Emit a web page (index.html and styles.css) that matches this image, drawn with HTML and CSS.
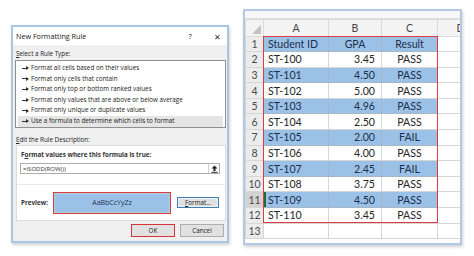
FILE: index.html
```html
<!DOCTYPE html>
<html>
<head>
<meta charset="utf-8">
<link rel="stylesheet" href="styles.css">
</head>
<body>
<div class="stage">
  <div class="dialog">
    <div class="titlebar">
      <span class="title">New Formatting Rule</span>
      <span class="help">?</span>
      <span class="close">✕</span>
    </div>
    <div class="dbody">
      <div class="label"><u>S</u>elect a Rule Type:</div>
      <ul class="rulelist">
        <li><span class="arrow"></span>Format all cells based on their values</li>
        <li><span class="arrow"></span>Format only cells that contain</li>
        <li><span class="arrow"></span>Format only top or bottom ranked values</li>
        <li><span class="arrow"></span>Format only values that are above or below average</li>
        <li><span class="arrow"></span>Format only unique or duplicate values</li>
        <li class="sel"><span class="arrow"></span>Use a formula to determine which cells to format</li>
      </ul>
      <div class="label label2"><u>E</u>dit the Rule Description:</div>
      <div class="panel">
        <div class="panel-top">
          <div class="bold">F<u>o</u>rmat values where this formula is true:</div>
          <div class="formula">
            <span class="ftext">=ISODD(ROW())</span>
            <span class="collapse">
              <svg width="9" height="8" viewBox="0 0 9 8"><path d="M4.5 0.5 L7.5 3.5 H5.5 V6 H3.5 V3.5 H1.5 Z" fill="#222"/><rect x="1.5" y="6.8" width="6" height="1" fill="#222"/></svg>
            </span>
          </div>
        </div>
        <div class="panel-bottom">
          <span class="bold plabel">Preview:</span>
          <div class="preview">AaBbCcYyZz</div>
          <div class="btn fmt"><u>F</u>ormat...</div>
        </div>
      </div>
      <div class="buttons">
        <div class="btn ok">OK</div>
        <div class="btn">Cancel</div>
      </div>
    </div>
  </div>

  <div class="sheet">
    <div class="sheet-inner">
      <div class="topstrip"></div>
      <table class="grid">
        <colgroup><col class="c0"><col class="ca"><col class="cb"><col class="cc"><col class="cd"></colgroup>
        <tr class="colhead"><th class="corner"><span class="tri"></span></th><th>A</th><th>B</th><th>C</th><th>D</th></tr>
        <tr class="blue"><th>1</th><td>Student ID</td><td class="ctr">GPA</td><td class="ctr">Result</td><td class="e"></td></tr>
        <tr><th>2</th><td>ST-100</td><td class="num">3.45</td><td class="ctr">PASS</td><td class="e"></td></tr>
        <tr class="blue"><th>3</th><td>ST-101</td><td class="num">4.50</td><td class="ctr">PASS</td><td class="e"></td></tr>
        <tr><th>4</th><td>ST-102</td><td class="num">5.00</td><td class="ctr">PASS</td><td class="e"></td></tr>
        <tr class="blue"><th>5</th><td>ST-103</td><td class="num">4.96</td><td class="ctr">PASS</td><td class="e"></td></tr>
        <tr><th>6</th><td>ST-104</td><td class="num">2.50</td><td class="ctr">PASS</td><td class="e"></td></tr>
        <tr class="blue"><th>7</th><td>ST-105</td><td class="num">2.00</td><td class="ctr">FAIL</td><td class="e"></td></tr>
        <tr><th>8</th><td>ST-106</td><td class="num">4.00</td><td class="ctr">PASS</td><td class="e"></td></tr>
        <tr class="blue"><th>9</th><td>ST-107</td><td class="num">2.45</td><td class="ctr">FAIL</td><td class="e"></td></tr>
        <tr><th>10</th><td>ST-108</td><td class="num">3.75</td><td class="ctr">PASS</td><td class="e"></td></tr>
        <tr class="blue"><th class="active">11</th><td class="act">ST-109</td><td class="num">4.50</td><td class="ctr">PASS</td><td class="e"></td></tr>
        <tr><th>12</th><td>ST-110</td><td class="num">3.45</td><td class="ctr">PASS</td><td class="e"></td></tr>
        <tr><th>13</th><td></td><td></td><td></td><td class="e"></td></tr>
      </table>
      <div class="highlight"></div>
    </div>
  </div>
</div>
</body>
</html>
```

FILE: styles.css
```css
* { box-sizing: border-box; }
html, body { margin: 0; padding: 0; background: #fff; }
body { width: 474px; height: 256px; overflow: hidden; }

.stage {
  display: flex;
  align-items: flex-start;
}

/* ---------- dialog ---------- */
.dialog {
  margin-left: 11px;
  margin-top: 25px;
  width: 218px;
  height: 218px;
  border: 2px solid #a9c5e4;
  box-shadow: 1px 2px 3px rgba(0,0,0,0.18);
  background: #f0f0f0;
  display: flex;
  flex-direction: column;
  font-family: "Open Sans", "Liberation Sans", sans-serif;
  color: #222;
}
.titlebar {
  height: 18px;
  background: #fff;
  display: flex;
  align-items: center;
  padding-left: 3px;
  font-size: 7.2px;
}
.title { flex: 1; }
.help { width: 10px; text-align: center; margin-right: 17px; font-size: 7.5px; }
.close { width: 10px; text-align: center; margin-right: 5px; font-size: 8px; color: #333; }

.dbody {
  flex: 1;
  display: flex;
  flex-direction: column;
  padding: 4px 1px 0 2px;
  font-size: 6.3px;
}
.label { height: 10px; line-height: 10px; padding-left: 1px; margin-bottom: 1px; }
.label2 { margin-top: 7px; margin-bottom: 0; }

.rulelist {
  list-style: none;
  margin: 0;
  padding: 2px 2px 1px 2px;
  background: #fff;
  border: 1px solid #8e8f8f;
  height: 68px;
}
.rulelist li {
  height: 10.6px;
  line-height: 10.6px;
  display: flex;
  align-items: center;
  padding-left: 4px;
}
.rulelist li.sel { background: #e5e5e5; }
.arrow {
  display: inline-block;
  position: relative;
  width: 6px;
  height: 1px;
  background: #333;
  margin-right: 3px;
}
.arrow::after {
  content: "";
  position: absolute;
  right: -1px;
  top: -1.5px;
  border-left: 3px solid #333;
  border-top: 2px solid transparent;
  border-bottom: 2px solid transparent;
}

.panel {
  margin-left: 1px;
  height: 76px;
  background: #fff;
  border: 1px solid #dcdcdc;
  display: flex;
  flex-direction: column;
}
.panel-top {
  height: 39px;
  padding: 4px 5px 0 3px;
  border-bottom: 1px solid #e8e8e8;
}
.bold { font-weight: 700; color: #333; }
.panel-top .bold { height: 10px; line-height: 10px; padding-left: 1px; }
.formula {
  margin-top: 3px;
  height: 11px;
  border: 1px solid #adadad;
  display: flex;
  align-items: center;
  justify-content: space-between;
  padding-left: 2px;
  font-size: 6px;
  color: #333;
}
.collapse {
  width: 11px;
  height: 9px;
  margin-right: 0;
  display: flex;
  align-items: center;
  justify-content: center;
  border-left: 1px solid #d0d0d0;
}
.panel-bottom {
  flex: 1;
  display: flex;
  align-items: center;
  padding: 0 6px 0 4px;
}
.plabel { width: 32px; }
.preview {
  width: 119px;
  height: 22px;
  background: #9bc2e6;
  border: 1px solid #d8403c;
  box-shadow: inset 0 0 0 1px #b7c9dd;
  display: flex;
  align-items: center;
  justify-content: center;
  color: #1e3556;
  font-size: 7px;
  margin-right: 6px;
}
.btn {
  width: 44px;
  height: 13px;
  background: #e1e1e1;
  border: 1px solid #adadad;
  display: flex;
  align-items: center;
  justify-content: center;
  font-size: 6.3px;
  color: #222;
}
.fmt {
  width: 42px;
  height: 11px;
  border: 1px solid #3c7fb1;
  box-shadow: inset 0 0 0 1px #e9f2fa;
}
.buttons {
  flex: 1;
  display: flex;
  justify-content: flex-end;
  align-items: flex-start;
  gap: 5px;
  padding-top: 3px;
  padding-right: 2px;
}
.ok { border: 1px solid #d6343a; }

/* ---------- sheet ---------- */
.sheet {
  margin-left: 14px;
  margin-top: 9px;
  width: 219px;
  height: 236px;
  border: 2px solid #b1c9e5;
  box-shadow: 1px 2px 3px rgba(0,0,0,0.18);
  background: #fff;
  overflow: hidden;
}
.sheet-inner {
  position: relative;
  width: 215px;
  height: 232px;
  overflow: hidden;
}
.topstrip {
  height: 8px;
  background: #f7f7f7;
  border-bottom: 1px solid #e2e2e2;
}
.grid {
  border-collapse: collapse;
  table-layout: fixed;
  width: 238px;
  font-family: "Lato", "Liberation Sans", sans-serif;
  font-size: 10.6px;
  color: #262626;
}
.c0 { width: 18px; }
.ca { width: 65px; }
.cb { width: 53px; }
.cc { width: 56px; }
.cd { width: 46px; }
.grid th, .grid td {
  height: 15.6px;
  padding: 0;
  border: 1px solid #d6d6d6;
  line-height: 14px;
  white-space: nowrap;
  overflow: hidden;
}
.grid tr.colhead th {
  height: 16.5px;
  background: #f4f4f4;
  font-weight: 400;
  color: #444;
  border-color: #dadada;
  text-align: center;
}
.grid th {
  background: #ececec;
  font-weight: 400;
  color: #4a4a4a;
  text-align: center;
  font-size: 10.5px;
}
.grid th.active { background: #d3d3d3; }
.corner { position: relative; }
.tri {
  position: absolute;
  right: 2px;
  bottom: 2px;
  border-left: 9px solid transparent;
  border-bottom: 9px solid #c2c2c2;
}
.grid td { padding-left: 4px; }
.grid td.num { text-align: right; padding-right: 6px; padding-left: 0; }
.grid td.ctr { text-align: center; padding-left: 0; }
.grid tr.blue td { background: #9bc2e6; color: #1b2f4d; border-color: #a7b6c6; }
.grid tr.blue td.e { background: #fff; border-color: #d6d6d6; }
.grid td.act { box-shadow: inset 2px 0 0 #1e6b3f; }

.highlight {
  position: absolute;
  left: 18px;
  top: 24.5px;
  width: 175px;
  height: 187px;
  border: 1.5px solid #df3a40;
  pointer-events: none;
}
```
